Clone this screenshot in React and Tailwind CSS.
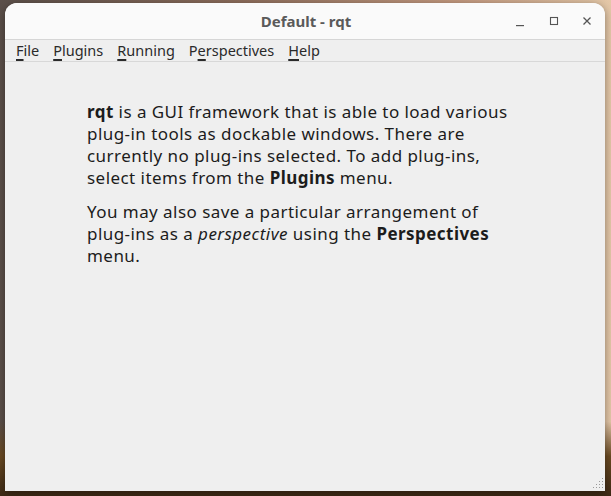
import React from 'react'

const font = { fontFamily: '"Noto Sans", "Open Sans", sans-serif' }

const MenuItem = ({ pre = '', u, rest }) => (
  <span className="mr-[14px]">
    {pre}
    <span className="underline decoration-[1.5px] underline-offset-[3px]">{u}</span>
    {rest}
  </span>
)

export default function App() {
  return (
    <div
      className="w-[611px] h-[496px] overflow-hidden pt-[3px] pl-[5px] bg-[linear-gradient(180deg,rgba(0,0,0,0)_0%,rgba(0,0,0,0)_85%,#6a4a22_92%,#3e2a16_100%),linear-gradient(90deg,#5b4f49_0%,#8e6e5c_40%,#c49a80_75%,#e4c8a8_100%)]"
      style={font}
    >
      <div className="w-[600px] h-[488px] flex flex-col rounded-t-[12px] overflow-hidden bg-[#efefef] shadow-[0_2px_8px_rgba(0,0,0,0.4)]">
        {/* title bar */}
        <div className="h-[37px] shrink-0 bg-[#fafafa] border-b border-[#d6d6d6] flex items-center relative">
          <div className="flex-1 text-center text-[15px] font-bold text-[#5a5a5a] pl-[2px]">Default - rqt</div>
          <div className="absolute right-0 top-0 h-full flex items-center text-[#555]">
            <svg width="12" height="12" viewBox="0 0 12 12" className="mr-[22px] mt-[2px]">
              <rect x="2" y="9" width="8" height="1.2" fill="#555" />
            </svg>
            <svg width="12" height="12" viewBox="0 0 12 12" className="mr-[21px]">
              <rect x="2.5" y="2.5" width="7" height="7" fill="none" stroke="#555" strokeWidth="1.1" />
            </svg>
            <svg width="12" height="12" viewBox="0 0 12 12" className="mr-[12px]">
              <path d="M2.5 2.5 L9.5 9.5 M9.5 2.5 L2.5 9.5" stroke="#555" strokeWidth="1.3" />
            </svg>
          </div>
        </div>
        {/* menu bar */}
        <div className="h-[22px] shrink-0 border-b border-[#d8d8d8] flex items-center pl-[11px] text-[14.5px] text-[#2a2a2a] leading-none">
          <MenuItem u="F" rest="ile" />
          <MenuItem u="P" rest="lugins" />
          <MenuItem u="R" rest="unning" />
          <MenuItem pre="P" u="e" rest="rspectives" />
          <MenuItem u="H" rest="elp" />
        </div>
        {/* content */}
        <div className="flex-1 relative">
          <div className="pl-[82px] pt-[39px] text-[17px] tracking-[0.45px] leading-[22px] text-[#1c1c1c]">
            <p>
              <b>rqt</b> is a GUI framework that is able to load various
              <br />
              plug-in tools as dockable windows. There are
              <br />
              currently no plug-ins selected. To add plug-ins,
              <br />
              select items from the <b>Plugins</b> menu.
            </p>
            <p className="mt-[12px]">
              You may also save a particular arrangement of
              <br />
              plug-ins as a <i>perspective</i> using the <b>Perspectives</b>
              <br />
              menu.
            </p>
          </div>
          <svg width="12" height="12" viewBox="0 0 12 12" className="absolute right-[1px] bottom-[2px]">
            {[[10, 1], [7, 4], [10, 4], [4, 7], [7, 7], [10, 7], [1, 10], [4, 10], [7, 10], [10, 10]].map(([x, y], i) => (
              <rect key={i} x={x} y={y} width="1" height="1" fill="#9a9a9a" />
            ))}
          </svg>
        </div>
      </div>
    </div>
  )
}
